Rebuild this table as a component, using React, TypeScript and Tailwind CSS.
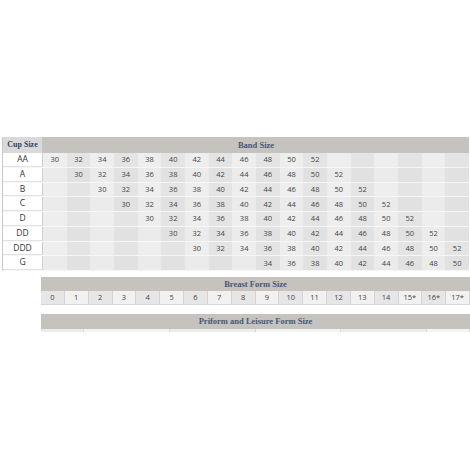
const rows: { label: string; start: number; first: number; last: number }[] = [
  { label: 'AA', start: 0, first: 30, last: 52 },
  { label: 'A', start: 1, first: 30, last: 52 },
  { label: 'B', start: 2, first: 30, last: 52 },
  { label: 'C', start: 3, first: 30, last: 52 },
  { label: 'D', start: 4, first: 30, last: 52 },
  { label: 'DD', start: 5, first: 30, last: 52 },
  { label: 'DDD', start: 6, first: 30, last: 52 },
  { label: 'G', start: 9, first: 34, last: 50 },
]

const forms = ['0', '1', '2', '3', '4', '5', '6', '7', '8', '9', '10', '11', '12', '13', '14', '15*', '16*', '17*']

function cellsFor(r: (typeof rows)[number]) {
  const out: string[] = Array(18).fill('')
  let v = r.first
  for (let i = r.start; i < 18 && v <= r.last; i++, v += 2) out[i] = String(v)
  return out
}

export default function App() {
  return (
    <div className="w-[470px] h-[470px] bg-white overflow-hidden pt-[137px] font-['Open_Sans','Lato',sans-serif]">
      {/* Main size chart */}
      <div className="ml-[2px] w-[467px] border-l border-[#c9c9c9]">
        <div className="grid grid-cols-[40px_repeat(18,1fr)] h-[16px] bg-[#c6c2bd]">
          <div className="bg-[#d9d9d9] border-r border-[#c4c4c4] flex items-center justify-center text-[8px] font-bold text-[#34435f] font-['Liberation_Serif',serif]">
            Cup Size
          </div>
          <div className="col-span-18 flex items-center justify-center text-[8.5px] font-bold text-[#46577a] font-['Liberation_Serif',serif]">
            Band Size
          </div>
        </div>
        {rows.map((r, ri) => (
          <div key={r.label} className="grid grid-cols-[40px_repeat(18,1fr)] h-[14.75px] border-b border-[#f6f6f6]">
            <div className="bg-white border-r border-[#cfcfcf] border-b border-b-[#e2e2e2] flex items-center justify-center text-[8.5px] text-[#333]">
              {r.label}
            </div>
            {cellsFor(r).map((c, ci) => (
              <div
                key={ci}
                className={`flex items-center justify-center text-[7.5px] text-[#444] ${
                  ci % 2 === 0 ? (ri % 2 === 0 ? 'bg-[#eeeeee]' : 'bg-[#ebebeb]') : ri % 2 === 0 ? 'bg-[#e4e4e4]' : 'bg-[#e1e1e1]'
                }`}
              >
                {c}
              </div>
            ))}
          </div>
        ))}
      </div>

      {/* Breast form size */}
      <div className="ml-[41px] mt-[6px] w-[429px]">
        <div className="h-[14px] bg-[#c6c2bd] flex items-center justify-center text-[8.5px] font-bold text-[#46577a] font-['Liberation_Serif',serif]">
          Breast Form Size
        </div>
        <div className="grid grid-cols-[repeat(18,1fr)] h-[14px] border-b border-[#d6d6d6]">
          {forms.map((f, i) => (
            <div
              key={f}
              className={`flex items-center justify-center text-[7.5px] text-[#444] border-r border-[#d4d4d4] ${
                i % 2 === 0 ? 'bg-[#e6e6e6]' : 'bg-[#f1f1f1]'
              }`}
            >
              {f}
            </div>
          ))}
        </div>
      </div>

      {/* Priform and leisure */}
      <div className="ml-[41px] mt-[9px] w-[429px]">
        <div className="h-[15px] bg-[#c6c2bd] flex items-center justify-center text-[8.5px] font-bold text-[#46577a] font-['Liberation_Serif',serif]">
          Priform and Leisure Form Size
        </div>
        <div className="grid grid-cols-[1fr_2fr_2fr_2fr_2fr_1fr] h-[3px]">
          {[0, 1, 2, 3, 4, 5].map((i) => (
            <div key={i} className={`border-r border-[#d8d8d8] ${i % 2 === 0 ? 'bg-[#ececec]' : 'bg-[#f4f4f4]'}`} />
          ))}
        </div>
      </div>
    </div>
  )
}
